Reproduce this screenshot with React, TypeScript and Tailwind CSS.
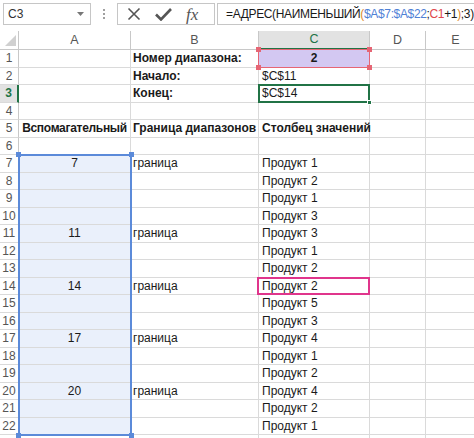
import React from "react";

const widths = ["w-[112px]", "w-[128px]", "w-[111px]", "w-[56px]", "w-[60px]"];
const letters = ["A", "B", "C", "D", "E"];

const products: Record<number, string> = {
  7: "Продукт 1", 8: "Продукт 2", 9: "Продукт 1", 10: "Продукт 3", 11: "Продукт 3",
  12: "Продукт 1", 13: "Продукт 2", 14: "Продукт 2", 15: "Продукт 5", 16: "Продукт 3",
  17: "Продукт 4", 18: "Продукт 1", 19: "Продукт 2", 20: "Продукт 4", 21: "Продукт 2",
  22: "Продукт 1",
};
const bounds = [7, 11, 14, 17, 20];

function Cell({ w, className = "", children }: { w: string; className?: string; children?: React.ReactNode }) {
  return (
    <div className={`relative ${w} shrink-0 h-full border-r border-b border-[#dadada] flex items-center overflow-visible whitespace-nowrap ${className}`}>
      {children}
    </div>
  );
}

function Handle({ className }: { className: string }) {
  return <span className={`absolute w-[5px] h-[5px] z-20 ${className}`} />;
}

function SheetRow({ r }: { r: number }) {
  const inRange = r >= 7 && r <= 22;
  const sel = r === 3;
  let a: React.ReactNode = null, b: React.ReactNode = null, c: React.ReactNode = null;
  if (r === 1) b = "Номер диапазона:";
  if (r === 2) b = "Начало:";
  if (r === 3) b = "Конец:";
  if (r === 5) { a = "Вспомагательный"; b = "Граница диапазонов"; c = "Столбец значений"; }
  if (bounds.includes(r)) { a = String(r); b = "граница"; }
  if (products[r]) c = products[r];
  if (r === 2) c = "$C$11";
  if (r === 3) c = "$C$14";
  const boldRow = r <= 3 || r === 5;

  return (
    <div className="flex h-[17.5px]">
      <div className={`w-[19px] shrink-0 h-full flex items-center justify-center text-[12px] border-b border-[#dadada] ${sel ? "bg-[#e2e2e2] text-[#217346] font-bold border-r-2 border-r-[#217346]" : "text-[#555] border-r border-r-[#c8c8c8]"}`}>
        {r <= 22 ? r : ""}
      </div>
      <Cell w={widths[0]} className={`justify-center ${inRange ? "bg-[#eaf0fb]" : ""} ${r === 5 ? "font-bold tracking-[-0.3px]" : ""}`}>
        {a}
      </Cell>
      <Cell w={widths[1]} className={`pl-[2px] ${boldRow ? "font-bold" : ""}`}>{b}</Cell>
      <Cell w={widths[2]} className={`${r === 1 ? "bg-[#d3c8f2] justify-center font-bold" : "pl-[3px]"} ${r === 5 ? "font-bold" : ""}`}>
        {r === 1 ? "2" : c}
        {r === 1 && (
          <>
            <span className="absolute -left-px -top-px -right-px -bottom-px border border-[#e66574] z-10" />
            <Handle className="-left-[3px] -top-[3px] bg-[#e66574]" />
            <Handle className="-right-[3px] -top-[3px] bg-[#e66574]" />
            <Handle className="-left-[3px] -bottom-[3px] bg-[#e66574]" />
            <Handle className="-right-[3px] -bottom-[3px] bg-[#e66574]" />
          </>
        )}
        {r === 3 && (
          <>
            <span className="absolute -left-px -top-px -right-px -bottom-px border-2 border-[#217346] z-10" />
            <Handle className="-right-[3px] -bottom-[3px] bg-[#217346] border border-white" />
          </>
        )}
        {r === 14 && (
          <span className="absolute -left-[2px] -top-px -right-px -bottom-px border-2 border-[#e0358c] z-10" />
        )}
      </Cell>
      <Cell w={widths[3]} />
      <Cell w={widths[4]} />
    </div>
  );
}

export default function App() {
  const rows = Array.from({ length: 23 }, (_, i) => i + 1);
  return (
    <div className="w-[474px] h-[438px] overflow-hidden bg-white text-[#1a1a1a]" style={{ fontFamily: '"Liberation Sans", Arial, sans-serif' }}>
      {/* formula bar */}
      <div className="h-[31px] flex items-start pt-[3px] text-[12px]">
        <div className="ml-[3px] w-[88px] shrink-0 h-[22px] border border-[#c6c6c6] flex items-center justify-between pl-[4px] pr-[6px] text-[#333]">
          <span>C3</span>
          <svg width="7" height="4" viewBox="0 0 7 4"><path d="M0 0h7L3.5 4z" fill="#777" /></svg>
        </div>
        <div className="w-[26px] shrink-0 h-[22px] flex flex-col items-center justify-center gap-[2px]">
          <span className="w-[2px] h-[2px] bg-[#a0a0a0]" />
          <span className="w-[2px] h-[2px] bg-[#a0a0a0]" />
          <span className="w-[2px] h-[2px] bg-[#a0a0a0]" />
        </div>
        <div className="w-[98px] shrink-0 h-[22px] border border-[#c6c6c6] flex items-center px-[9px] gap-[14px]">
          <svg width="14" height="14" viewBox="0 0 14 14"><path d="M1.5 1.5l11 11M12.5 1.5l-11 11" stroke="#555" strokeWidth="1.6" /></svg>
          <svg width="17" height="14" viewBox="0 0 17 14"><path d="M1 7.5l5 5L16 2" stroke="#555" strokeWidth="2.6" fill="none" /></svg>
          <span className="italic text-[17px] leading-none text-[#555]" style={{ fontFamily: '"Liberation Serif", serif' }}>fx</span>
        </div>
        <div className="ml-[2px] flex-1 min-w-0 overflow-hidden h-[22px] border border-[#c6c6c6] border-r-0 flex items-center pl-[8px] text-[12px] tracking-[-0.35px] whitespace-nowrap">
          <span>=АДРЕС(НАИМЕНЬШИЙ</span>
          <span className="text-[#e08a2a]">(</span>
          <span className="text-[#4f81d6]">$A$7:$A$22</span>
          <span>;</span>
          <span className="text-[#e0474c]">C1</span>
          <span>+1</span>
          <span className="text-[#e08a2a]">)</span>
          <span>;3)</span>
        </div>
      </div>

      {/* column headers */}
      <div className="flex h-[19px] text-[12.5px] text-[#555]">
        <div className="w-[19px] shrink-0 border-r border-b border-[#c8c8c8] relative">
          <svg className="absolute right-[2px] bottom-[3px]" width="11" height="11" viewBox="0 0 11 11"><path d="M11 0v11H0z" fill="#d0d0d0" /></svg>
        </div>
        {letters.map((l, i) => (
          <div
            key={l}
            className={`${widths[i]} shrink-0 flex items-center justify-center border-r border-[#c8c8c8] ${l === "C" ? "bg-[#e2e2e2] text-[#217346] border-b-2 border-b-[#217346]" : "border-b border-b-[#c8c8c8]"}`}
          >
            {l}
          </div>
        ))}
      </div>

      {/* grid */}
      <div className="relative text-[12px]">
        {rows.map((r) => <SheetRow key={r} r={r} />)}
        {/* reference range $A$7:$A$22 */}
        <div className="absolute left-[18px] top-[104px] w-[114px] h-[282px] border-2 border-[#5b8ad9] pointer-events-none z-10">
          <Handle className="-left-[4px] -top-[4px] bg-[#5b8ad9]" />
          <Handle className="-right-[4px] -top-[4px] bg-[#5b8ad9]" />
          <Handle className="-left-[4px] -bottom-[4px] bg-[#5b8ad9]" />
          <Handle className="-right-[4px] -bottom-[4px] bg-[#5b8ad9]" />
        </div>
      </div>
    </div>
  );
}
